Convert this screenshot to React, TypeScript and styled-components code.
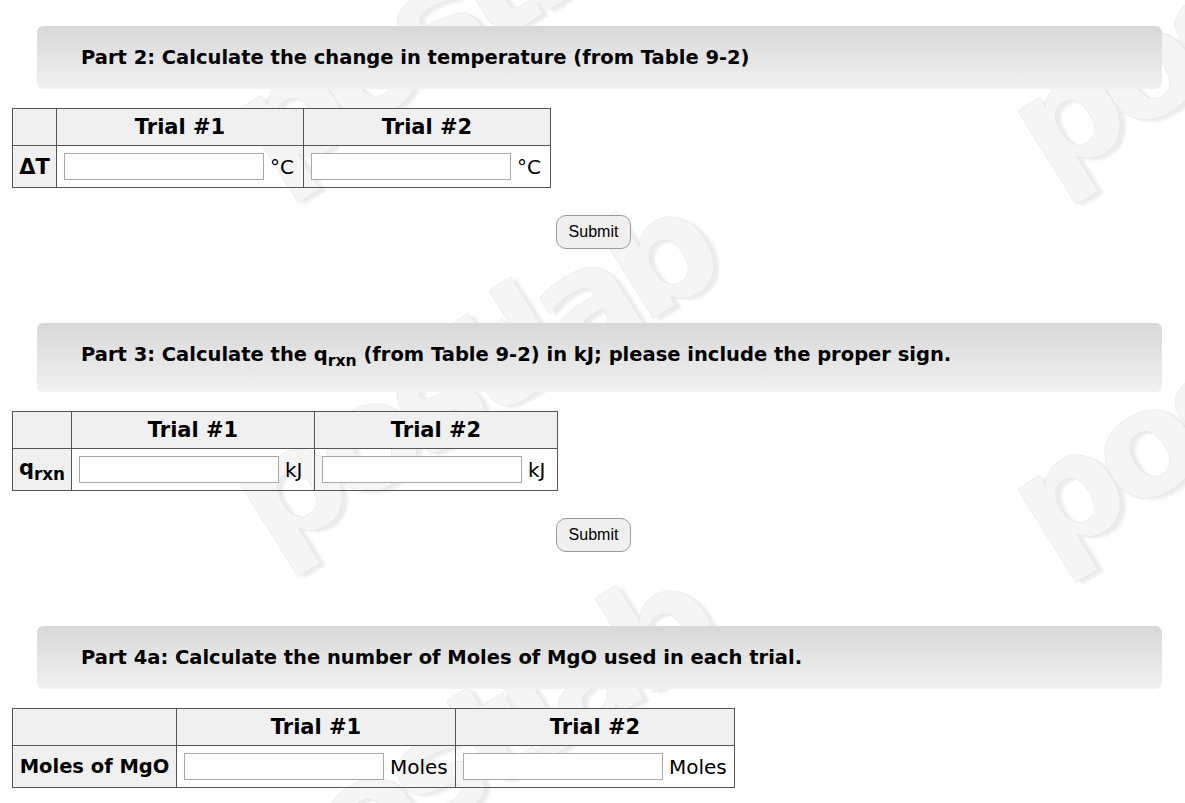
import styled, { createGlobalStyle } from "styled-components";

const GlobalStyle = createGlobalStyle`
  html, body {
    margin: 0;
    padding: 0;
    background: #fff;
  }
`;

const Page = styled.div`
  position: relative;
  overflow: hidden;
  min-height: 803px;
  box-sizing: border-box;
  padding: 26px 23px 40px 12px;
  font-family: "DejaVu Sans", Verdana, sans-serif;
  color: #000;
`;

const Watermarks = styled.div`
  position: absolute;
  inset: 0;
  z-index: 0;
  pointer-events: none;
`;

const Mark = styled.span`
  position: absolute;
  transform-origin: 0 0;
  transform: rotate(-32deg);
  font-family: "DejaVu Sans", sans-serif;
  font-weight: 700;
  font-size: 146px;
  line-height: 1;
  letter-spacing: -12px;
  white-space: nowrap;
  color: #f5f5f5;
  text-shadow: 0 0 1px #d9d9d9, 0 0 1px #d9d9d9, 4px 5px 3px #ececec;
`;

const Content = styled.div`
  position: relative;
  z-index: 1;
  display: flex;
  flex-direction: column;
  align-items: flex-start;
`;

const PartHeader = styled.h2<{ $top?: number; $bottomPad?: number }>`
  align-self: stretch;
  margin: ${(p) => p.$top ?? 0}px 0 19px 25px;
  padding: 20px 44px ${(p) => p.$bottomPad ?? 20}px;
  border-radius: 6px;
  background: linear-gradient(to bottom, #d8d8d8, #f1f1f1);
  font-size: 19.5px;
  line-height: 23px;
  font-weight: 700;
`;

const Sub = styled.sub`
  font-size: 0.8em;
  line-height: 1.12;
  vertical-align: sub;
`;

const DataTable = styled.table<{ $w: number }>`
  width: ${(p) => p.$w}px;
  table-layout: fixed;
  border-collapse: collapse;
`;

const Col = styled.col<{ $w: number }>`
  width: ${(p) => p.$w}px;
`;

const HeadCell = styled.th`
  height: 36px;
  padding: 0 6px;
  border: 1px solid #555;
  background: #f0f0f0;
  font-family: "DejaVu Sans", Tahoma, sans-serif;
  font-size: 21px;
  font-weight: 700;
  text-align: center;
  vertical-align: middle;
  white-space: nowrap;
`;

const RowLabel = styled(HeadCell)<{ $size?: number }>`
  height: 41px;
  padding: 0 3px;
  font-size: ${(p) => p.$size ?? 21}px;
`;

const ValueCell = styled.td`
  padding: 0 0 0 7px;
  border: 1px solid #555;
  white-space: nowrap;
  vertical-align: middle;
`;

const Field = styled.input`
  box-sizing: border-box;
  width: 200px;
  height: 27px;
  margin: 0 6px 0 0;
  padding: 0 4px;
  border: 1px solid #a9a9a9;
  background: #fff;
  vertical-align: middle;
`;

const Unit = styled.span`
  font-family: "DejaVu Sans", Tahoma, sans-serif;
  font-size: 20px;
  vertical-align: middle;
`;

const SubmitButton = styled.button`
  align-self: center;
  margin: 27px 0 0 13px;
  width: 75px;
  height: 34px;
  padding: 0;
  border: 1px solid #999;
  border-radius: 10px;
  background: #efefef;
  font-family: "Liberation Sans", Arial, sans-serif;
  font-size: 16px;
  color: #000;
`;

type TableProps = {
  label: React.ReactNode;
  labelSize?: number;
  unit: string;
  widths: [number, number];
};

const TrialTable: React.FC<TableProps> = ({ label, labelSize, unit, widths }) => (
  <DataTable $w={widths[0] + widths[1] * 2}>
    <colgroup>
      <Col $w={widths[0]} />
      <Col $w={widths[1]} />
      <Col $w={widths[1]} />
    </colgroup>
    <thead>
      <tr>
        <HeadCell />
        <HeadCell>Trial #1</HeadCell>
        <HeadCell>Trial #2</HeadCell>
      </tr>
    </thead>
    <tbody>
      <tr>
        <RowLabel $size={labelSize}>{label}</RowLabel>
        <ValueCell>
          <Field type="text" />
          <Unit>{unit}</Unit>
        </ValueCell>
        <ValueCell>
          <Field type="text" />
          <Unit>{unit}</Unit>
        </ValueCell>
      </tr>
    </tbody>
  </DataTable>
);

// watermark word positions (left/top of the rotated text box)
const marks = [
  [206, 78],
  [206, 452],
  [206, 826],
  [984, 80],
  [984, 458],
];

const App: React.FC = () => (
  <>
    <GlobalStyle />
    <Page>
      <Watermarks aria-hidden="true">
        {marks.map(([x, y], i) => (
          <Mark key={i} style={{ left: x, top: y }}>
            postlab
          </Mark>
        ))}
      </Watermarks>
      <Content>
        <PartHeader>
          Part 2: Calculate the change in temperature (from Table 9-2)
        </PartHeader>
        <TrialTable label="ΔT" unit="°C" widths={[44, 247]} />
        <SubmitButton>Submit</SubmitButton>

        <PartHeader $top={74} $bottomPad={22}>
          Part 3: Calculate the q<Sub>rxn</Sub> (from Table 9-2) in kJ; please
          include the proper sign.
        </PartHeader>
        <TrialTable
          label={
            <>
              q<Sub>rxn</Sub>
            </>
          }
          unit="kJ"
          widths={[59, 243]}
        />
        <SubmitButton>Submit</SubmitButton>

        <PartHeader $top={74}>
          Part 4a: Calculate the number of Moles of MgO used in each trial.
        </PartHeader>
        <TrialTable
          label="Moles of MgO"
          labelSize={19.5}
          unit="Moles"
          widths={[164, 279]}
        />
      </Content>
    </Page>
  </>
);

export default App;
